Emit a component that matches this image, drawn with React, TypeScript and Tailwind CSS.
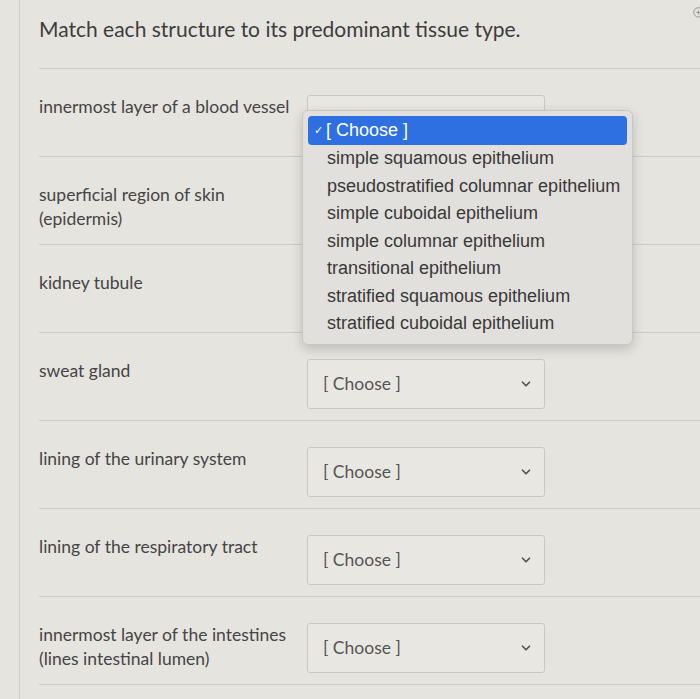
import { ChevronDown, ZoomIn } from "lucide-react";

const rows: string[][] = [
  ["innermost layer of a blood vessel"],
  ["superficial region of skin", "(epidermis)"],
  ["kidney tubule"],
  ["sweat gland"],
  ["lining of the urinary system"],
  ["lining of the respiratory tract"],
  ["innermost layer of the intestines", "(lines intestinal lumen)"],
];

const options = [
  "simple squamous epithelium",
  "pseudostratified columnar epithelium",
  "simple cuboidal epithelium",
  "simple columnar epithelium",
  "transitional epithelium",
  "stratified squamous epithelium",
  "stratified cuboidal epithelium",
];

export default function App() {
  return (
    <div className="relative h-[699px] w-[700px] overflow-hidden bg-[#e6e4df] font-['Lato',sans-serif] text-[#454545]">
      <div className="absolute right-[-6px] top-[6px] text-[#8a8a8a]">
        <ZoomIn size={14} strokeWidth={1.5} />
      </div>

      <div className="ml-[19px] h-full border-l border-[#cfcdc8] pl-[19px]">
        <h1 className="pt-[14px] text-[21px] leading-[30px] text-[#3d3d3d]">
          Match each structure to its predominant tissue type.
        </h1>
        <div className="mt-[24px] border-t border-[#cdcbc6]" />

        {rows.map((r, i) => (
          <div key={i} className="flex h-[88px] items-start border-b border-[#cdcbc6] pt-[26px]">
            <div className="w-[268px] text-[17.5px] leading-[24px]">
              {r.map((t) => (
                <div key={t}>{t}</div>
              ))}
            </div>
            {/* the first three selects sit under the open menu */}
            <div className="flex h-[50px] w-[238px] items-center justify-between rounded-[3px] border border-[#c9c7c2] bg-[#e9e7e2] pl-[15px] pr-[11px] text-[17.5px] text-[#555]">
              <span>{i < 3 ? "" : "[ Choose ]"}</span>
              <ChevronDown size={14} strokeWidth={3} className="text-[#555]" />
            </div>
          </div>
        ))}
      </div>

      <div className="absolute left-[302px] top-[110px] w-[331px] rounded-[6px] border border-[#c9c7c3] bg-[#e2e0dc] px-[5px] pb-[6px] pt-[5px] font-['Liberation_Sans',sans-serif] text-[18px] text-[#383838] shadow-[0_4px_12px_rgba(0,0,0,0.18)]">
        <div className="flex h-[29px] items-center rounded-[4px] bg-[#2e6fe2] pl-[6px] text-white">
          <span className="mr-[3px] text-[11px]">✓</span>
          <span>[ Choose ]</span>
        </div>
        {options.map((o) => (
          <div key={o} className="flex h-[27.5px] items-center pl-[19px]">
            {o}
          </div>
        ))}
      </div>
    </div>
  );
}
